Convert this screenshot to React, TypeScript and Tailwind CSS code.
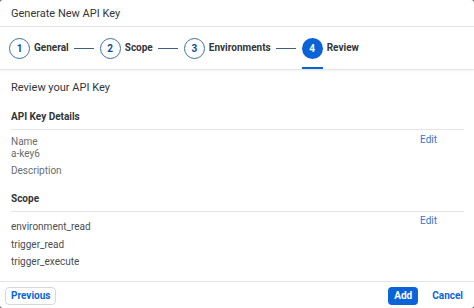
import React from "react";

const font = { fontFamily: "Roboto, 'Liberation Sans', sans-serif" };

function Step({ n, label, active, last }: { n: number; label: string; active?: boolean; last?: boolean }) {
  return (
    <div className="flex items-center">
      <div className="relative flex items-center">
        <div
          className={
            active
              ? "w-[21px] h-[21px] rounded-full bg-[#0a64d8] text-white flex items-center justify-center text-[10px] font-bold"
              : "w-[21px] h-[21px] rounded-full border border-[#3f6fa6] text-[#0d4f96] flex items-center justify-center text-[10px] font-bold bg-white"
          }
        >
          {n}
        </div>
        {active && <div className="absolute left-0 top-[29px] w-[21px] h-[2px] bg-[#0a64d8]" />}
      </div>
      <span className="ml-[4px] text-[10px] font-bold text-[#32363a] leading-none">{label}</span>
      {!last && <div className="ml-[5px] mr-[6px] w-[20px] h-px bg-[#3f5f80]" />}
    </div>
  );
}

export default function App() {
  return (
    <div className="w-[474px] h-[308px] bg-[#6b6b6b]" style={font}>
      <div className="w-full h-full bg-white rounded-[3px] flex flex-col overflow-hidden">
        <div className="h-[27px] shrink-0 flex items-center px-[11px] border-b border-[#e3e3e3]">
          <span className="text-[11px] text-[#32363a] leading-none">Generate New API Key</span>
        </div>
        <div className="h-[43px] shrink-0 flex items-center pl-[9px] border-b border-[#e6e6e6] shadow-[0_1px_2px_rgba(0,0,0,0.06)] relative">
          <Step n={1} label="General" />
          <Step n={2} label="Scope" />
          <Step n={3} label="Environments" />
          <Step n={4} label="Review" active last />
        </div>
        <div className="flex-1 flex flex-col pl-[11px] pr-[10px] pt-[10px]">
          <div className="text-[11px] leading-[16px] text-[#32363a]">Review your API Key</div>
          <div className="mt-[13px] text-[10px] leading-[16px] font-bold text-[#32363a]">API Key Details</div>
          <div className="mt-[4px] h-px bg-[#e5e5e5]" />
          <div className="flex items-start justify-between">
            <div className="pt-[6px] flex flex-col">
              <div className="text-[10px] leading-[12px] text-[#6a6d70]">Name</div>
              <div className="text-[10px] leading-[12px] text-[#6a6d70]">a-key6</div>
              <div className="mt-[5px] text-[10px] leading-[12px] text-[#6a6d70]">Description</div>
            </div>
            <div className="pt-[3px] mr-[27px] text-[10px] leading-[14px] text-[#3b73c4]">Edit</div>
          </div>
          <div className="mt-[14px] text-[10px] leading-[16px] font-bold text-[#32363a]">Scope</div>
          <div className="mt-[4px] h-px bg-[#e5e5e5]" />
          <div className="flex items-start justify-between">
            <div className="pt-[8px] flex flex-col">
              <div className="text-[10px] leading-[14px] text-[#4a4d50]">environment_read</div>
              <div className="mt-[4px] text-[10px] leading-[14px] text-[#4a4d50]">trigger_read</div>
              <div className="mt-[3px] text-[10px] leading-[14px] text-[#4a4d50]">trigger_execute</div>
            </div>
            <div className="pt-[2px] mr-[27px] text-[10px] leading-[14px] text-[#3b73c4]">Edit</div>
          </div>
        </div>
        <div className="h-[27px] shrink-0 border-t border-[#e5e5e5] flex items-start pt-[5px] px-[5px] justify-between">
          <button className="h-[18px] px-[5px] rounded-[4px] border border-[#d5d9de] bg-white text-[10px] font-bold text-[#0a64d8] leading-none">
            Previous
          </button>
          <div className="flex items-center">
            <button className="h-[18px] w-[30px] rounded-[4px] bg-[#0a64d8] text-white text-[10px] font-bold leading-none">
              Add
            </button>
            <button className="ml-[14px] mr-[6px] h-[18px] text-[10px] font-bold text-[#0a64d8] leading-none">
              Cancel
            </button>
          </div>
        </div>
      </div>
    </div>
  );
}
